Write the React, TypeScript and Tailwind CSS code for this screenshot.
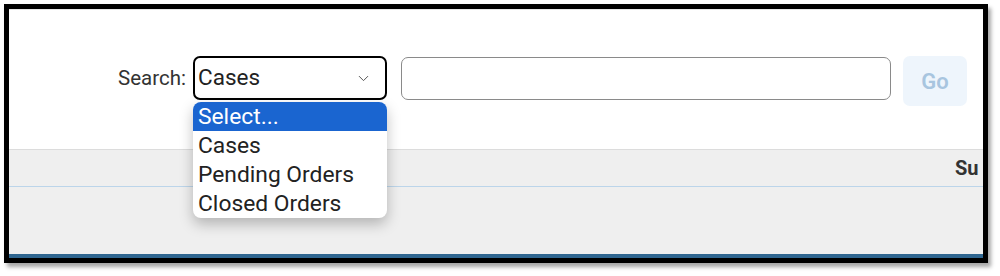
import { ChevronDown } from 'lucide-react';

const options = ['Select...', 'Cases', 'Pending Orders', 'Closed Orders'];

const App = () => {
  return (
    <div className="w-[1000px] h-[276px] bg-white p-1 font-['Roboto',sans-serif]">
      <div className="w-[984px] h-[259px] border-[5px] border-black bg-white shadow-[3px_4px_4px_rgba(0,0,0,0.35)] flex flex-col overflow-hidden">
        {/* Search bar */}
        <div className="h-[140px] border-t border-[#e6e6e6] flex justify-end items-start pt-[46px] pr-[16px] shrink-0">
          <label className="text-[20.5px] text-[#333] leading-[44px] mr-[7px]">Search:</label>
          <div className="relative w-[194px]">
            <div className="h-[44px] border-2 border-black rounded-[7px] flex items-center justify-between pl-[3px] pr-[13px]">
              <span className="text-[22.5px] text-[#222]">Cases</span>
              <ChevronDown size={17} strokeWidth={1.4} className="text-[#555]" />
            </div>
            {/* Open dropdown */}
            <ul className="absolute left-0 top-[46px] w-[194px] bg-white rounded-[8px] shadow-[0_6px_14px_rgba(0,0,0,0.25)] overflow-hidden z-10">
              {options.map((opt, i) => (
                <li
                  key={opt}
                  className={
                    i === 0
                      ? 'h-[29px] leading-[29px] pl-[5px] text-[22.8px] bg-[#1a65d0] text-white'
                      : 'h-[29px] leading-[29px] pl-[5px] text-[22.8px] text-[#222]'
                  }
                >
                  {opt}
                </li>
              ))}
            </ul>
          </div>
          <div className="w-[490px] h-[43px] ml-[14px] mt-[1px] border-[1.5px] border-[#8a8a8a] rounded-[7px]" />
          <button className="w-[64px] h-[50px] ml-[12px] bg-[#eef5fc] rounded-[7px] text-[22px] font-semibold text-[#a8c5df]">
            Go
          </button>
        </div>

        {/* Table header */}
        <div className="h-[38px] bg-[#efefef] border-t border-[#dcdcdc] border-b border-b-[#bcd5ea] grid grid-cols-[946px_1fr] items-center shrink-0">
          <div />
          <div className="whitespace-nowrap text-[20px] font-bold text-[#333]">Su</div>
        </div>

        {/* Table body */}
        <div className="flex-1 bg-[#efefef] border-b-[4px] border-[#2f6690]" />
      </div>
    </div>
  );
};

export default App;
